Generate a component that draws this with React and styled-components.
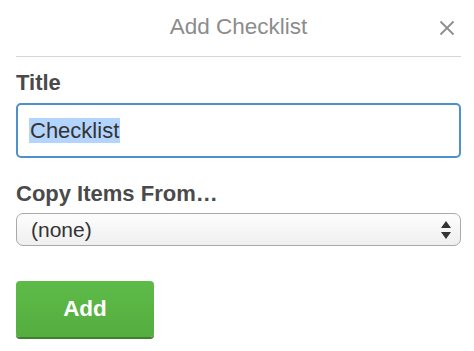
import styled, { createGlobalStyle } from "styled-components";

const GlobalStyle = createGlobalStyle`
  html, body {
    margin: 0;
    padding: 0;
    background: #fff;
  }
  body {
    font-family: "Liberation Sans", Arial, sans-serif;
    color: #4d4d4d;
  }
`;

const Popover = styled.div`
  width: 474px;
  height: 351px;
  background: #fff;
  overflow: hidden;
`;

const Header = styled.div`
  position: relative;
  height: 56px;
  margin: 0 13px 0 16px;
  border-bottom: 1px solid #d6d6d6;
  display: flex;
  align-items: center;
  justify-content: center;

  h2 {
    margin: 0 0 3px;
    font-size: 22.5px;
    font-weight: 400;
    color: #8c8c8c;
  }
`;

const Close = styled.button`
  position: absolute;
  right: 4px;
  top: 18px;
  width: 20px;
  height: 20px;
  padding: 0;
  border: 0;
  background: none;
  display: flex;
  align-items: center;
  justify-content: center;
`;

const Body = styled.div`
  padding: 11px 13px 0 16px;
`;

const Label = styled.label`
  display: block;
  font-size: 22px;
  font-weight: 700;
  color: #4a4a4a;
  line-height: 30px;
  margin-bottom: ${(p) => p.$gap || 5}px;
`;

const TextBox = styled.div`
  box-sizing: border-box;
  height: 55px;
  border: 2px solid #4d90cc;
  border-radius: 5px;
  padding: 0 11px;
  display: flex;
  align-items: center;
  font-size: 22px;
  color: #333;
  margin-bottom: 21px;

  span {
    background: #b3d4fc;
    line-height: 25px;
    padding: 0 1px;
  }
`;

const Select = styled.div`
  box-sizing: border-box;
  height: 33px;
  border: 1px solid #a9a9a9;
  border-radius: 7px;
  background: linear-gradient(#fdfdfd, #efefef);
  padding: 0 8px 0 14px;
  display: flex;
  align-items: center;
  justify-content: space-between;
  font-size: 21px;
  color: #333;
  margin-bottom: 35px;
`;

const AddButton = styled.button`
  width: 138px;
  height: 56px;
  border: 0;
  border-radius: 4px;
  background: linear-gradient(#5ebb48, #55ad40);
  box-shadow: 0 2px 0 #3f7f30;
  color: #fff;
  font-family: "Liberation Sans", Arial, sans-serif;
  font-size: 22.5px;
  font-weight: 700;
`;

export default function App() {
  return (
    <>
      <GlobalStyle />
      <Popover>
        <Header>
          <h2>Add Checklist</h2>
          <Close aria-label="Close">
            <svg width="16" height="16" viewBox="0 0 16 16">
              <path d="M1.5 1.5 L14.5 14.5 M14.5 1.5 L1.5 14.5" stroke="#8e8e8e" strokeWidth="1.8" />
            </svg>
          </Close>
        </Header>
        <Body>
          <Label>Title</Label>
          <TextBox>
            <span>Checklist</span>
          </TextBox>
          <Label $gap={4}>Copy Items From…</Label>
          <Select>
            <span>(none)</span>
            <svg width="12" height="20" viewBox="0 0 12 20">
              <path d="M6 1 L11 8 L1 8 Z M1 12 L11 12 L6 19 Z" fill="#333" />
            </svg>
          </Select>
          <AddButton>Add</AddButton>
        </Body>
      </Popover>
    </>
  );
}
